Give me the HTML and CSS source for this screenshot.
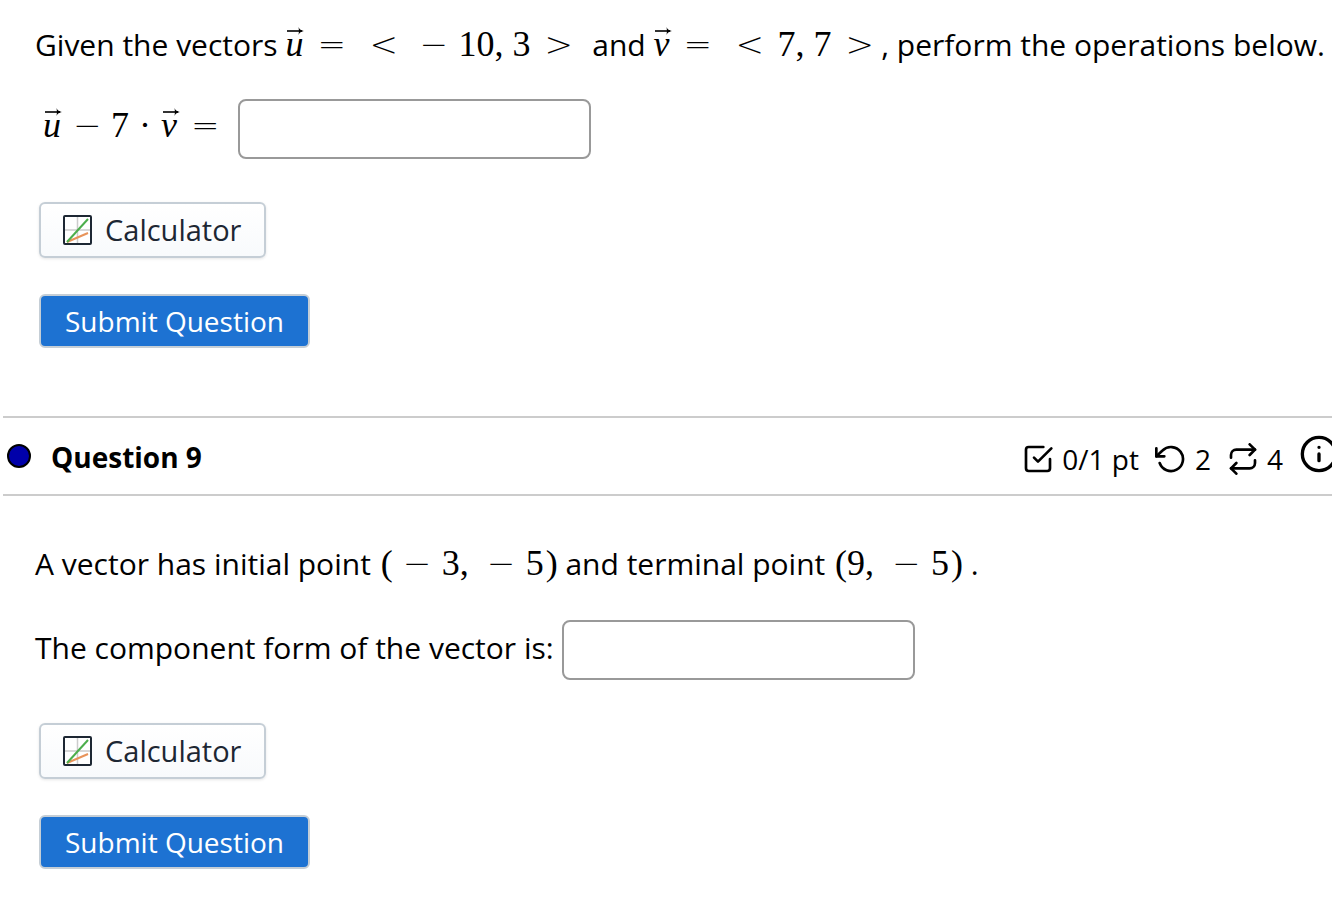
FILE: index.html
```
<!DOCTYPE html>
<html lang="en">
<head>
  <meta charset="UTF-8" />
  <meta name="viewport" content="width=device-width, initial-scale=1.0"/>
  <title>Vector Operations</title>
  <link rel="stylesheet" href="styles.css">
</head>
<body>
  <!-- shared icon shapes -->
  <svg class="sprite" aria-hidden="true">
    <symbol id="arrow" viewBox="0 0 17 8">
      <path d="M0 4h15" stroke="currentColor" stroke-width="1.6" fill="none"/>
      <path d="M11.500 0c.6 2 2 3.300 5.300 4c-3.300.7-4.700 2-5.300 4c.5-2.500.5-5.500 0-8z" fill="currentColor"/>
    </symbol>
    <symbol id="graph" viewBox="0 0 30 30">
      <rect x="1" y="1" width="27" height="28" rx="1" fill="#fff" stroke="#1d2733" stroke-width="2"/>
      <path d="M14.500 2v26M2 15h25" stroke="#ccc" stroke-width="1.500"/>
      <path d="M4 27L25 18" stroke="#e8935a" stroke-width="2"/>
      <path d="M4 27L25 4" stroke="#4cae4c" stroke-width="2"/>
    </symbol>
  </svg>

  <main class="page">
    <section class="question">
      <p class="line">
        Given the vectors
        <span class="math"><i class="vec">u<svg><use href="#arrow"/></svg></i><span class="op rel">=</span><span class="op open">&lt;</span><span class="op neg lead">−</span><span>10,</span><span class="num">3</span><span class="op close">&gt;</span></span>
        <span class="after">and</span>
        <span class="math"><i class="vec">v<svg><use href="#arrow"/></svg></i><span class="op rel">=</span><span class="op open">&lt;</span><span class="arg">7,</span><span class="num">7</span><span class="op close">&gt;</span></span>
        , perform the operations below.
      </p>

      <div class="line answer indent">
        <label class="math" for="answer8"><i class="vec">u<svg><use href="#arrow"/></svg></i><span class="op bin">−</span><span>7</span><span class="dot">·</span><i class="vec">v<svg><use href="#arrow"/></svg></i><span class="op rel">=</span></label>
        <input type="text" id="answer8" class="field wide-gap" />
      </div>

      <div class="buttons">
        <button type="button" class="btn calc"><svg><use href="#graph"/></svg>Calculator</button>
        <button type="submit" class="btn submit">Submit Question</button>
      </div>
    </section>

    <header class="question-header">
      <span class="status"></span>
      <h2>Question 9</h2>
      <div class="score">
        <span class="stat">
          <svg viewBox="0 0 24 24"><polyline points="9 11 12 14 22 4"/><path d="M21 12v7a2 2 0 0 1-2 2H5a2 2 0 0 1-2-2V5a2 2 0 0 1 2-2h11"/></svg>
          0/1 pt
        </span>
        <span class="stat">
          <svg viewBox="0 0 24 24"><polyline points="1 4 1 10 7 10"/><path d="M3.510 15a9 9 0 1 0 2.130-9.360L1 10"/></svg>
          2
        </span>
        <span class="stat">
          <svg viewBox="0 0 24 24"><polyline points="17 1 21 5 17 9"/><path d="M3 11V9a4 4 0 0 1 4-4h14"/><polyline points="7 23 3 19 7 15"/><path d="M21 13v2a4 4 0 0 1-4 4H3"/></svg>
          4
        </span>
        <button type="button" class="info" aria-label="Details">
          <svg viewBox="0 0 24 24"><circle cx="12" cy="12" r="10"/><path d="M12 16v-4M12 8h.01"/></svg>
        </button>
      </div>
    </header>

    <section class="question next">
      <p class="line">
        A vector has initial point
        <span class="math"><span class="paren">(</span><span class="op neg first">−</span><span>3,</span><span class="op neg">−</span><span>5</span><span class="paren">)</span></span>
        and terminal point
        <span class="math"><span class="paren">(</span><span>9,</span><span class="op neg">−</span><span>5</span><span class="paren">)</span></span>
        .
      </p>

      <div class="line answer">
        <label for="answer9">The component form of the vector is:</label>
        <input type="text" id="answer9" class="field" />
      </div>

      <div class="buttons">
        <button type="button" class="btn calc"><svg><use href="#graph"/></svg>Calculator</button>
        <button type="submit" class="btn submit">Submit Question</button>
      </div>
    </section>
  </main>
</body>
</html>
```
FILE: styles.css
```
body {
  margin: 0;
  background: #fff;
  color: #000;
  font-family: "Open Sans", "Noto Sans", sans-serif;
  font-size: 30px;
  line-height: 44px;
  overflow-x: hidden;
}

.sprite {
  position: absolute;
  width: 0;
  height: 0;
}

.page {
  padding-left: 3px;
}

.question {
  padding: 22px 0 68px 32px;
}

.next {
  padding-top: 45px;
}

.line {
  margin: 0;
  white-space: nowrap;
}

/* math */
.math {
  display: inline-flex;
  align-items: baseline;
  font-family: "Liberation Serif", serif;
  font-size: 36px;
}

.vec {
  position: relative;
}

.vec svg {
  position: absolute;
  left: 2px;
  top: 5px;
  width: 17px;
  height: 8px;
}

.op {
  width: 28px;
  font-family: "DejaVu Sans", sans-serif;
  font-size: 34px;
  font-weight: 200;
  text-align: center;
}

.rel {
  margin-left: 14px;
}

.open {
  margin-left: 24px;
}

.close {
  margin-left: 14px;
}

.bin {
  margin: 0 10px 0 12px;
}

.neg {
  margin: 0 11px 0 18px;
}

.lead {
  margin-left: 22px;
}

.first {
  margin-left: 10px;
}

.paren {
  margin-left: 2px;
}

.num {
  margin-left: 9px;
}

.arg {
  margin-left: 14px;
}

.dot {
  margin: 0 10px;
}

.after {
  margin-left: 12px;
}

.answer {
  display: flex;
  align-items: center;
  margin-top: 32px;
}

.next .answer {
  margin-top: 34px;
}

.answer label {
  padding-bottom: 4px;
}

.answer .math {
  padding-bottom: 8px;
}

.indent {
  padding-left: 8px;
}

.field {
  box-sizing: border-box;
  width: 353px;
  height: 60px;
  margin-left: 8px;
  padding: 8px;
  border: 2px solid #999;
  border-radius: 8px;
  font: inherit;
}

.wide-gap {
  margin-left: 19px;
}

/* buttons */
.buttons {
  display: flex;
  flex-direction: column;
  align-items: flex-start;
  gap: 36px;
  margin: 43px 0 0 4px;
}

.btn {
  box-sizing: border-box;
  border: 2px solid #c5ced6;
  border-radius: 6px;
  font: inherit;
  cursor: pointer;
}

.calc {
  display: flex;
  align-items: center;
  gap: 12px;
  height: 56px;
  padding: 0 23px 0 22px;
  background: linear-gradient(#fff, #f8fafc);
  color: #1d2733;
  font-size: 29px;
  box-shadow: 0 1px 3px #0000001a;
}

.calc svg {
  width: 30px;
  height: 30px;
}

.submit {
  height: 54px;
  padding: 0 24px;
  background: #1d72d2;
  color: #fff;
  font-size: 28px;
}

/* question header */
.question-header {
  display: flex;
  align-items: center;
  height: 76px;
  margin-right: -7px;
  border-top: 2px solid #ccc;
  border-bottom: 2px solid #ccc;
}

.status {
  box-sizing: border-box;
  width: 24px;
  height: 24px;
  margin: 0 20px 0 4px;
  border: 2px solid #000;
  border-radius: 50%;
  background: #00a;
}

h2 {
  margin: 0;
  padding-top: 2px;
  font-size: 28px;
}

.score {
  display: flex;
  align-items: center;
  gap: 16px;
  margin-left: auto;
  font-size: 28px;
}

.stat {
  display: flex;
  align-items: center;
  gap: 8px;
  padding-top: 6px;
}

.score svg {
  width: 32px;
  height: 32px;
  fill: none;
  stroke: #000;
  stroke-width: 2;
  stroke-linecap: round;
  stroke-linejoin: round;
}

.info {
  display: flex;
  padding: 0 0 4px;
  border: 0;
  background: none;
  cursor: pointer;
}

.score .info svg {
  width: 40px;
  height: 40px;
}
```
